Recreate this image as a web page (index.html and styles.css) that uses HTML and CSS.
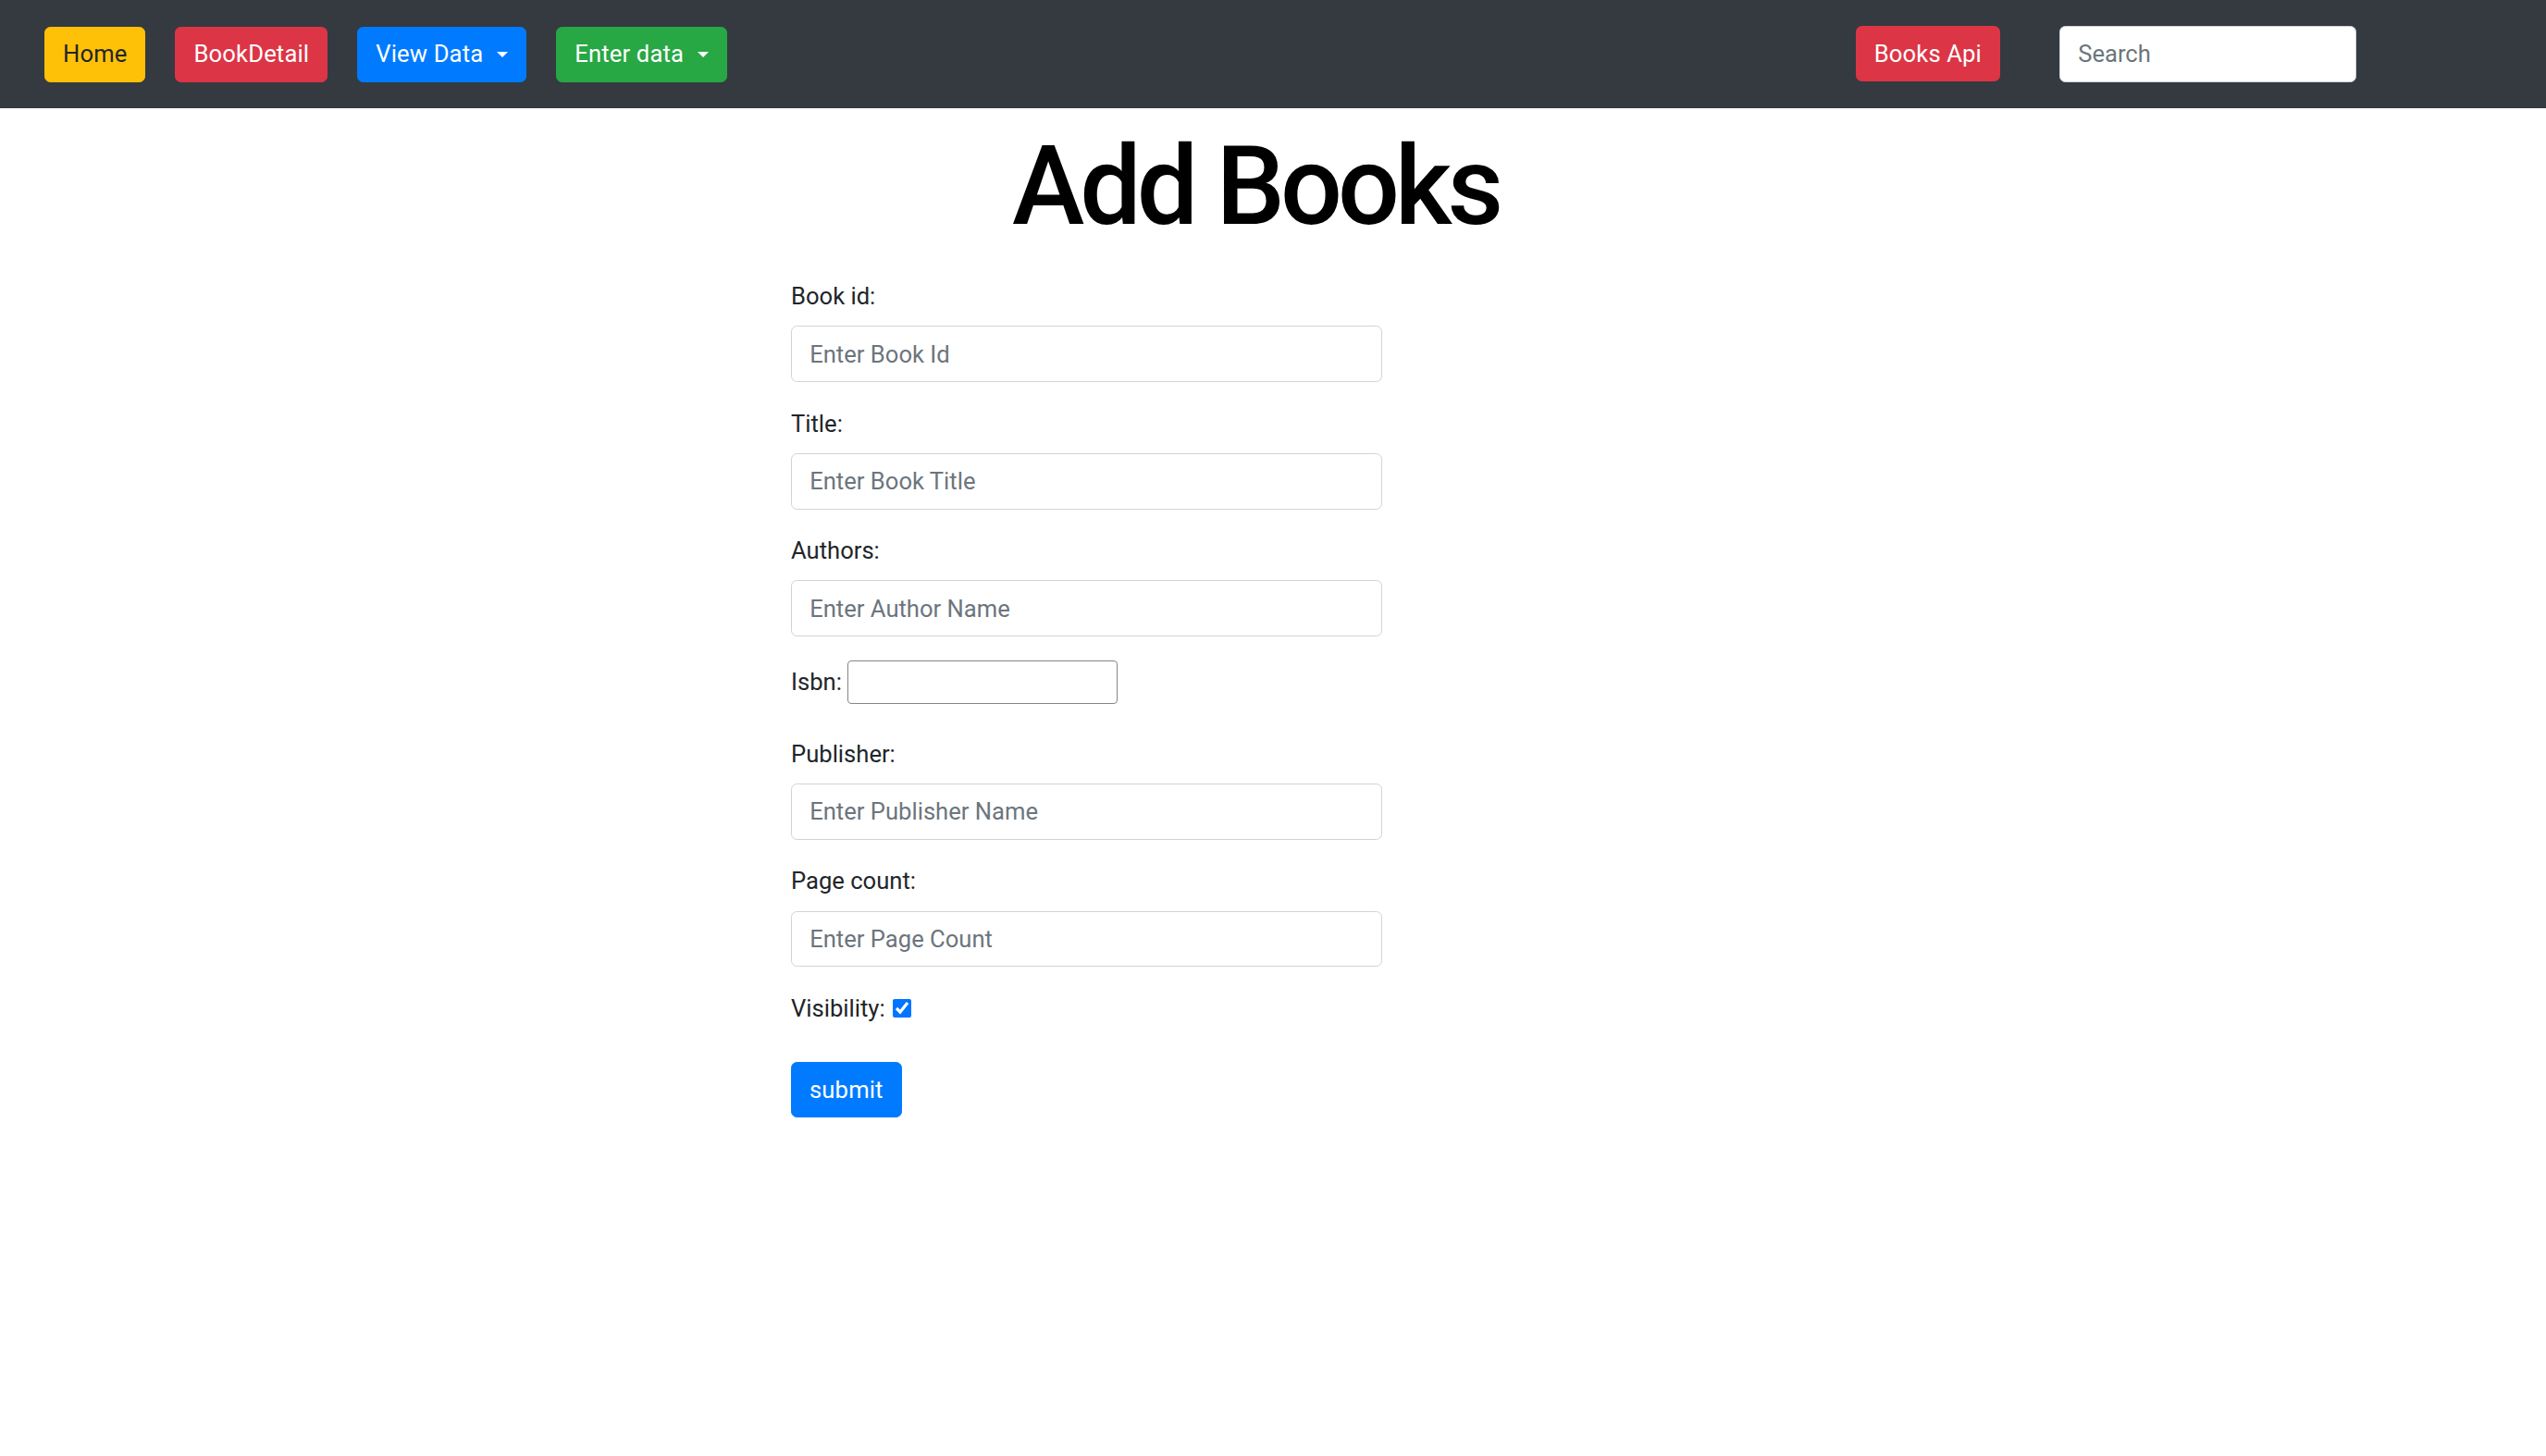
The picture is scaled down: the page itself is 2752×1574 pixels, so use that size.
FILE: index.html
```html
<!DOCTYPE html>
<html lang="en">
<head>
<meta charset="utf-8">
<title>Add Books</title>
<link rel="stylesheet" href="styles.css">
</head>
<body>
<nav class="navbar">
  <div class="nav-left">
    <a class="btn btn-warning" href="#">Home</a>
    <a class="btn btn-danger" href="#">BookDetail</a>
    <button class="btn btn-primary dropdown-toggle" type="button">View Data</button>
    <button class="btn btn-success dropdown-toggle" type="button">Enter data</button>
  </div>
  <div class="nav-right">
    <a class="btn btn-danger" href="#">Books Api</a>
    <input class="form-control search" type="search" placeholder="Search">
  </div>
</nav>
<main class="page">
  <h1 class="title">Add Books</h1>
  <form class="book-form">
    <div class="form-group">
      <label class="label">Book id:</label>
      <input class="form-control" type="text" placeholder="Enter Book Id">
    </div>
    <div class="form-group">
      <label class="label">Title:</label>
      <input class="form-control" type="text" placeholder="Enter Book Title">
    </div>
    <div class="form-group">
      <label class="label">Authors:</label>
      <input class="form-control" type="text" placeholder="Enter Author Name">
    </div>
    <div class="isbn-row">
      <label class="inline-label">Isbn:</label>
      <input class="plain-input" type="text">
    </div>
    <div class="form-group">
      <label class="label">Publisher:</label>
      <input class="form-control" type="text" placeholder="Enter Publisher Name">
    </div>
    <div class="form-group">
      <label class="label">Page count:</label>
      <input class="form-control" type="text" placeholder="Enter Page Count">
    </div>
    <div class="form-group">
      <label class="label visibility">Visibility:<input class="check" type="checkbox" checked></label>
    </div>
    <button class="btn btn-primary submit" type="button">submit</button>
  </form>
</main>
</body>
</html>
```

FILE: styles.css
```css
html, body {
  margin: 0;
  padding: 0;
  background: #ffffff;
}

body {
  font-family: Roboto, "Liberation Sans", Arial, sans-serif;
  font-size: 25.6px;
  line-height: 1.5;
  color: #212529;
}

.navbar {
  display: flex;
  align-items: center;
  justify-content: space-between;
  height: 117px;
  box-sizing: border-box;
  padding: 0 205px 0 48px;
  background: #343a40;
}

.nav-left {
  display: flex;
  align-items: center;
  gap: 32px;
}

.nav-right {
  display: flex;
  align-items: center;
  gap: 64px;
}

.btn {
  display: inline-flex;
  align-items: center;
  box-sizing: border-box;
  height: 60px;
  padding: 0 19px;
  border: 1.6px solid transparent;
  border-radius: 6.4px;
  font-family: inherit;
  font-size: 25.6px;
  font-weight: 400;
  line-height: 1.5;
  letter-spacing: 0.15px;
  text-decoration: none;
  cursor: pointer;
}

.btn-warning { background: #ffc107; border-color: #ffc107; color: #212529; }
.btn-danger { background: #dc3545; border-color: #dc3545; color: #ffffff; }
.btn-primary { background: #007bff; border-color: #007bff; color: #ffffff; }
.btn-success { background: #28a745; border-color: #28a745; color: #ffffff; }

.dropdown-toggle::after {
  content: "";
  display: block;
  width: 0;
  height: 0;
  margin-left: 15px;
  border-top: 6.5px solid #ffffff;
  border-left: 6.5px solid transparent;
  border-right: 6.5px solid transparent;
}

.form-control {
  display: block;
  width: 100%;
  box-sizing: border-box;
  height: 60.8px;
  padding: 9.6px 19.2px;
  border: 1.6px solid #ced4da;
  border-radius: 6.4px;
  background: #ffffff;
  font-family: inherit;
  font-size: 25.6px;
  line-height: 1.5;
  color: #495057;
}

.form-control::placeholder {
  color: #6c757d;
  opacity: 1;
}

.search {
  width: 321px;
}

.page {
  display: block;
}

.title {
  margin: 12px 0 0;
  padding-right: 38px;
  text-align: center;
  font-size: 118px;
  line-height: 146px;
  font-weight: 500;
  letter-spacing: -5px;
  color: #000000;
}

.book-form {
  width: 639px;
  margin: 26px 0 0 855px;
}

.form-group {
  margin-bottom: 25.6px;
}

.label {
  display: inline-block;
  margin-bottom: 12.8px;
  line-height: 38.4px;
}

.isbn-row {
  display: flex;
  align-items: center;
  height: 47px;
  margin-bottom: 35px;
}

.inline-label {
  margin-right: 6px;
}

.plain-input {
  box-sizing: border-box;
  width: 292px;
  height: 47px;
  padding: 2px 4px;
  border: 1.6px solid #858585;
  border-radius: 4px;
  background: #ffffff;
  font-family: inherit;
  font-size: 21px;
}

.visibility {
  display: inline-flex;
  align-items: center;
}

.check {
  width: 20px;
  height: 20px;
  margin: 0 0 0 8px;
  accent-color: #0075ff;
}

.submit {
  padding: 0 19px;
}
```
